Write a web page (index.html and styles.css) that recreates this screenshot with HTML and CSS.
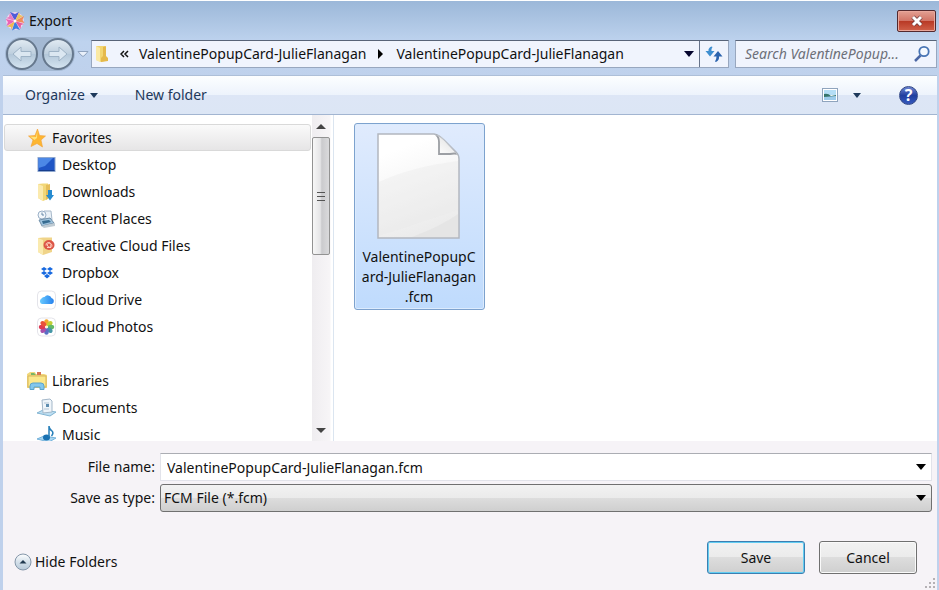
FILE: index.html
```html
<!DOCTYPE html>
<html lang="en">
<head>
    <meta charset="UTF-8">
    <meta name="viewport" content="width=device-width, initial-scale=1.0">
    <title>Export</title>
    <link rel="stylesheet" href="styles.css">
</head>
<body>
    <header class="titlebar">
        <svg class="app-icon" width="20" height="20" viewBox="0 0 20 20">
            <circle cx="10" cy="10" r="9" fill="#f0d4ee"/>
            <path d="M10 10L5 1L10 3L14 1Z" fill="#4f5cd8"/>
            <path d="M10 10L14 1.500L15 4L18 5Z" fill="#eac45c"/>
            <path d="M10 10L19 5L17.500 9L19.500 12Z" fill="#ef8d58"/>
            <path d="M10 10L19 13L16 14L15.500 18Z" fill="#e85f9c"/>
            <path d="M10 10L15 19L11 17.500L7 19.500Z" fill="#3f7fe0"/>
            <path d="M10 10L6.500 19L6 16L2 15.500Z" fill="#efb94f"/>
            <path d="M10 10L1.500 15L3 11L.5 8Z" fill="#ec62b4"/>
            <path d="M10 10L1 7L4 6L5 2Z" fill="#e77cc0"/>
            <circle cx="10" cy="10" r="1.500" fill="#fff"/>
        </svg>
        <h1>Export</h1>
        <button class="close" aria-label="Close">
            <svg width="14" height="12" viewBox="0 0 14 12">
                <path d="M3 2L11 10M11 2L3 10" stroke="#6d3b3c" stroke-width="4.500"/>
                <path d="M3 2L11 10M11 2L3 10" stroke="#fff" stroke-width="3"/>
            </svg>
        </button>
    </header>

    <div class="address-row">
        <div class="history">
            <button aria-label="Back">
                <svg width="22" height="22" viewBox="0 0 22 22"><path d="M2 11L10 4V8.500H20V13.500H10V18Z" fill="#dbe7f1" stroke="#9eb3c6"/></svg>
            </button>
            <button aria-label="Forward">
                <svg width="22" height="22" viewBox="0 0 22 22"><path d="M20 11L12 4V8.500H2V13.500H12V18Z" fill="#dbe7f1" stroke="#9eb3c6"/></svg>
            </button>
        </div>
        <button class="recent" aria-label="Recent pages">
            <svg width="12" height="8" viewBox="0 0 12 8"><path d="M1 1.500H11L8 5L6 6.500L4 5Z" fill="#e9f0fa" stroke="#8fa3bf"/></svg>
        </button>
        <nav class="address" aria-label="Address">
            <svg class="folder" width="16" height="20" viewBox="0 0 16 20">
                <path d="M2 2H11V17L7 18L2 16Z" fill="#f3d671"/>
                <path d="M2 2L6 4V18L2 16Z" fill="#fae9a4"/>
                <path d="M9 3L12 2V12L14 14V17L7 18V14L9 12Z" fill="#e5b94b"/>
            </svg>
            <button class="crumb-more" aria-label="More folders">
                <svg width="9" height="8" viewBox="0 0 9 8"><path d="M4 1L1 4L4 7M8 1L5 4L8 7" fill="none" stroke="#111" stroke-width="1.500"/></svg>
            </button>
            <a class="crumb" href="#">ValentinePopupCard-JulieFlanagan</a>
            <svg class="crumb-arrow" width="6" height="10" viewBox="0 0 6 10"><path d="M0 0L5 5L0 10Z" fill="#000"/></svg>
            <a class="crumb" href="#">ValentinePopupCard-JulieFlanagan</a>
            <button class="address-drop" aria-label="Previous locations">
                <svg width="10" height="6" viewBox="0 0 10 6"><path d="M0 0H10L5 6Z" fill="#05052e"/></svg>
            </button>
            <button class="refresh" aria-label="Refresh">
                <svg width="18" height="18" viewBox="0 0 18 18">
                    <path d="M6.500 1.500Q3 3 3.500 6H.5L5 11.500L9.500 6H6.500Q6 4 7.500 2Z" fill="#3f8fd0"/>
                    <path d="M11 17Q14.500 15 14 11.500H17.500L13 6L8.500 11.500H11.500Q11.500 14 10 16.500Z" fill="#2c64ae"/>
                </svg>
            </button>
        </nav>
        <div class="search">
            <input type="search" placeholder="Search ValentinePopup..." aria-label="Search folder">
            <svg width="18" height="18" viewBox="0 0 18 18">
                <path d="M7.500 10.500L2 16" stroke="#4b67a5" stroke-width="2.500"/>
                <circle cx="11" cy="6.500" r="4.700" fill="#f4f9ff" stroke="#4774b4" stroke-width="1.800"/>
            </svg>
        </div>
    </div>

    <div class="toolbar">
        <button class="organize">Organize
            <svg width="8" height="5" viewBox="0 0 8 5"><path d="M0 0H8L4 5Z" fill="#1e395b"/></svg>
        </button>
        <button class="new-folder">New folder</button>
        <button class="view" aria-label="Change view">
            <svg width="16" height="14" viewBox="0 0 16 14">
                <rect x=".5" y=".5" width="15" height="13" fill="#fff" stroke="#8fa4bd"/>
                <rect x="2" y="2" width="12" height="5" fill="#b4def6"/>
                <path d="M2 6Q6 5 9 8L14 7V10H2Z" fill="#35756b"/>
                <path d="M2 9L14 8V12H2Z" fill="#9ccbeb"/>
            </svg>
        </button>
        <button class="view-drop" aria-label="More views">
            <svg width="8" height="5" viewBox="0 0 8 5"><path d="M0 0H8L4 5Z" fill="#1e395b"/></svg>
        </button>
        <button class="help" aria-label="Help">?</button>
    </div>

    <main class="browser">
        <nav class="tree" aria-label="Folders">
            <ul>
                <li class="group selected">
                    <svg width="20" height="20" viewBox="0 0 20 20">
                        <path d="M10.500 1L12.500 7.500L18.500 8L14 12L15.500 19L10 15.500L4 18.500L6 12L1.500 8L8 7.500Z" fill="#fdb632" stroke="#f3a032" stroke-width=".6"/>
                        <path d="M10.500 2L9 9L3 8.500L7.500 12L10 10Z" fill="#ffe27d"/>
                    </svg>
                    <a href="#">Favorites</a>
                </li>
                <li>
                    <svg width="20" height="20" viewBox="0 0 20 20">
                        <rect x="0.500" y="2" width="18" height="15" fill="#8fa8cf"/>
                        <rect x="1.500" y="3" width="16" height="13" fill="#1f55c5"/>
                        <path d="M1.500 3H16L8 11L1.500 13Z" fill="#4c88e6"/>
                        <path d="M1.500 15H17.500V16H1.500Z" fill="#173d8c"/>
                    </svg>
                    <a href="#">Desktop</a>
                </li>
                <li>
                    <svg width="20" height="20" viewBox="0 0 20 20">
                        <path d="M1 2L6 1.500H11V17L6 19L1 16Z" fill="#f2d778"/>
                        <path d="M1 2L6 4V19L1 16Z" fill="#fbeaae"/>
                        <path d="M9 3L13 2V15L9 18Z" fill="#e5bd59"/>
                        <path d="M11 8H15V13H17L13 18.500L9 13H11Z" fill="#268bd0"/>
                    </svg>
                    <a href="#">Downloads</a>
                </li>
                <li>
                    <svg width="20" height="20" viewBox="0 0 20 20">
                        <path d="M7 2H14L15 11H8Z" fill="#eaf1f7" stroke="#a8b9ca"/>
                        <circle cx="5" cy="6" r="4" fill="#f2f7fb" stroke="#9bb0c7"/>
                        <path d="M5 3.500V6H7" fill="none" stroke="#6688a8"/>
                        <path d="M2 11L13 9L17 14L5 17Z" fill="#a1c5df" stroke="#708fa9"/>
                        <path d="M5 12L12 11L14 13L6 15Z" fill="#386d91"/>
                        <path d="M4 17L18 14V17L7 19Z" fill="#bfcbd3"/>
                    </svg>
                    <a href="#">Recent Places</a>
                </li>
                <li>
                    <svg width="20" height="20" viewBox="0 0 20 20">
                        <path d="M1 2L6 1.500H15V16L6 19L1 16Z" fill="#f0d489"/>
                        <path d="M1 2L6 4V19L1 16Z" fill="#faeaaf"/>
                        <ellipse cx="12" cy="9" rx="5.500" ry="5" fill="#dc5547"/>
                        <path d="M9 9.500A2.500 2.500 0 1 1 12 11.500L10 9A2.500 2.500 0 1 1 14 11.500H10" fill="none" stroke="#ffd0c0"/>
                    </svg>
                    <a href="#">Creative Cloud Files</a>
                </li>
                <li>
                    <svg width="20" height="20" viewBox="0 0 20 20">
                        <path d="M7 4L10 6L7 8L4 6ZM13 4L16 6L13 8L10 6ZM7 8L10 10L7 12L4 10ZM13 8L16 10L13 12L10 10ZM7 13L10 11L13 13L10 15.500Z" fill="#1769e0"/>
                    </svg>
                    <a href="#">Dropbox</a>
                </li>
                <li>
                    <svg width="20" height="20" viewBox="0 0 20 20">
                        <defs><linearGradient id="cloud"><stop stop-color="#69caff"/><stop offset="1" stop-color="#2681ed"/></linearGradient></defs>
                        <rect x=".5" y="1" width="18" height="18" rx="4" fill="#fff" stroke="#e4e4ea"/>
                        <path d="M5 14A3 3 0 0 1 4.500 8.500A3 3 0 0 1 7.500 7A4 4 0 0 1 14.500 8A3.200 3.200 0 0 1 15 14Z" fill="url(#cloud)"/>
                    </svg>
                    <a href="#">iCloud Drive</a>
                </li>
                <li>
                    <svg width="20" height="20" viewBox="0 0 20 20">
                        <rect x=".5" y="1" width="18" height="18" rx="4" fill="#fff" stroke="#e4e4ea"/>
                        <g transform="translate(9.500 10)">
                            <ellipse cy="-4.500" rx="2.300" ry="3.200" fill="#f5a52d"/>
                            <ellipse cy="-4.500" rx="2.300" ry="3.200" fill="#c2cf35" transform="rotate(45)"/>
                            <ellipse cy="-4.500" rx="2.300" ry="3.200" fill="#63b965" transform="rotate(90)"/>
                            <ellipse cy="-4.500" rx="2.300" ry="3.200" fill="#4596a6" transform="rotate(135)"/>
                            <ellipse cy="-4.500" rx="2.300" ry="3.200" fill="#596fc4" transform="rotate(180)"/>
                            <ellipse cy="-4.500" rx="2.300" ry="3.200" fill="#a850ac" transform="rotate(225)"/>
                            <ellipse cy="-4.500" rx="2.300" ry="3.200" fill="#de3954" transform="rotate(270)"/>
                            <ellipse cy="-4.500" rx="2.300" ry="3.200" fill="#ea513b" transform="rotate(315)"/>
                            <circle r="1.300" fill="#fff3d0"/>
                        </g>
                    </svg>
                    <a href="#">iCloud Photos</a>
                </li>
            </ul>
            <ul>
                <li class="group">
                    <svg width="20" height="20" viewBox="0 0 20 20">
                        <path d="M0 3L3 1H8L9 3H17L20 4V17H0Z" fill="#f0d77b"/>
                        <path d="M4 2H7L9 4H4Z" fill="#77b566"/><path d="M10 1H14V4H10Z" fill="#d87555"/>
                        <path d="M1 5H19V16H1Z" fill="#fbe88c" stroke="#d9b55d"/>
                        <path d="M3 18.500V15Q3 12 6 12H14Q17 12 17 15V18.500H13V16H7V18.500Z" fill="#82c7ed" stroke="#5ba4cc"/>
                    </svg>
                    <a href="#">Libraries</a>
                </li>
                <li>
                    <svg width="20" height="20" viewBox="0 0 20 20">
                        <path d="M0 15L6 12L19 14L13 18Z" fill="#bddff2" stroke="#82b4d2"/>
                        <path d="M5 2L13 1L15 3V14L6 15Z" fill="#eff5fa" stroke="#a3b7c9"/>
                        <path d="M7 5H12M7 11H12" stroke="#b4c6d5"/><path d="M9 6H12V9H9Z" fill="#5e8daf"/>
                    </svg>
                    <a href="#">Documents</a>
                </li>
                <li>
                    <svg width="20" height="20" viewBox="0 0 20 20">
                        <path d="M0 14L7 11L19 13L12 17Z" fill="#a9d6f1" stroke="#75b2da"/>
                        <ellipse cx="9.500" cy="12.500" rx="3.500" ry="3" fill="#1971b1"/>
                        <path d="M12 12V1Q12 4 15 6Q17 8 14.500 11" fill="none" stroke="#277fb9" stroke-width="1.500"/>
                    </svg>
                    <a href="#">Music</a>
                </li>
            </ul>
        </nav>
        <div class="scrollbar">
            <svg width="10" height="6" viewBox="0 0 10 6"><path d="M0 6L5 1L10 6Z" fill="#444"/></svg>
            <div class="thumb"><span></span><span></span><span></span></div>
            <svg class="down" width="10" height="6" viewBox="0 0 10 6"><path d="M0 0H10L5 5Z" fill="#444"/></svg>
        </div>
        <section class="files" aria-label="Files">
            <button class="file">
                <svg width="84" height="108" viewBox="0 0 84 108">
                    <defs>
                        <linearGradient id="paper" x2=".3" y2="1"><stop offset=".2" stop-color="#fff"/><stop offset="1" stop-color="#ececec"/></linearGradient>
                        <linearGradient id="fold" x1="0" y1="1" x2=".6" y2=".3"><stop stop-color="#fff"/><stop offset="1" stop-color="#e8e8e8"/></linearGradient>
                    </defs>
                    <path d="M1 2H57Q62 3 67 8L79 20Q82 23 82 27V106H1Z" fill="url(#paper)" stroke="#b2b7bf" stroke-width="1.500"/>
                    <path d="M2 50Q34 35 81 29V78L2 104Z" fill="#e9e9e9" opacity=".35"/>
                    <path d="M35 105Q64 94 81 82V105Z" fill="#ddd" opacity=".4"/>
                    <path d="M59 3Q62 5 62 10V22H73Q78 21 80 22L67 8Q62 3 59 3Z" fill="url(#fold)"/>
                    <path d="M59 3Q62 5 62 10V22H73Q78 21 80 22" fill="none" stroke="#9c9fa4" stroke-width="1.800"/>
                    <path d="M59 3Q63 4 67 8L80 22" fill="none" stroke="#bcc0c6"/>
                </svg>
                <span>ValentinePopupC<br>ard-JulieFlanagan<br>.fcm</span>
            </button>
        </section>
    </main>

    <form class="footer">
        <div class="fields">
            <label for="fileName">File name:</label>
            <div class="combo">
                <input type="text" id="fileName" value="ValentinePopupCard-JulieFlanagan.fcm">
                <svg width="10" height="6" viewBox="0 0 10 6"><path d="M0 0H10L5 6Z"/></svg>
            </div>
            <label for="fileType">Save as type:</label>
            <div class="combo">
                <select id="fileType">
                    <option>FCM File (*.fcm)</option>
                </select>
                <svg width="10" height="6" viewBox="0 0 10 6"><path d="M0 0H10L5 6Z"/></svg>
            </div>
        </div>
        <div class="actions">
            <button type="button" class="hide-folders">
                <svg width="18" height="18" viewBox="0 0 18 18">
                    <defs><linearGradient id="knob" x2="0" y2="1"><stop stop-color="#fff"/><stop offset=".5" stop-color="#d4e0ea"/><stop offset="1" stop-color="#b7c9d9"/></linearGradient></defs>
                    <circle cx="9" cy="9" r="8" fill="url(#knob)" stroke="#8496a9"/>
                    <path d="M5.500 10.500L9 7L12.500 10.500Z" fill="#20384f"/>
                </svg>
                Hide Folders
            </button>
            <button type="button" class="btn default">Save</button>
            <button type="button" class="btn">Cancel</button>
        </div>
        <svg class="grip" width="11" height="11" viewBox="0 0 11 11">
            <path d="M8 0H10V2H8ZM4 4H6V6H4ZM8 4H10V6H8ZM0 8H2V10H0ZM4 8H6V10H4ZM8 8H10V10H8Z" fill="#b5b1b5"/>
        </svg>
    </form>
</body>
</html>
```
FILE: styles.css
```css
* {
    box-sizing: border-box;
}
body {
    font-family: "Noto Sans", "Open Sans", sans-serif;
    font-size: 14px;
    line-height: 20px;
    color: #111;
    display: flex;
    flex-direction: column;
    height: 100vh;
    margin: 0;
    padding: 0 2px 0 3px;
    overflow: hidden;
    background: linear-gradient(#9bb7d8, #bed3ee 42px, #bfd1ec 80px);
    border-top: 1px solid #fff;
}
button, input, select {
    font: inherit;
    color: inherit;
}
button {
    display: flex;
    align-items: center;
    justify-content: center;
    padding: 0;
    border: none;
    background: none;
}
a {
    color: inherit;
    text-decoration: none;
}
svg {
    display: block;
    flex: none;
}

/* title bar */
.titlebar {
    display: flex;
    align-items: center;
    gap: 4px;
    height: 38px;
    padding: 2px 1px 0 2px;
}
h1 {
    margin: 0;
    font-size: 14px;
    font-weight: normal;
}
.close {
    width: 39px;
    height: 22px;
    margin-left: auto;
    border: 1px solid #53292e;
    border-radius: 2px;
    box-shadow: inset 0 0 0 1px #e9a79b;
    background: linear-gradient(#e3a093, #d27567 48%, #b93a26 52%, #d0614a);
}

/* address row */
.address-row {
    display: flex;
    align-items: center;
    height: 36px;
    padding-bottom: 6px;
}
.history {
    display: flex;
    gap: 4px;
    padding: 1px;
    margin-left: 2px;
    border-radius: 18px;
    background: #a4b9d3;
}
.history button {
    width: 32px;
    height: 32px;
    border: 2px solid #66788d;
    border-radius: 50%;
    background: linear-gradient(#e0eaf2, #bdcedd 50%, #b3c7d9 51%, #d4e4f0);
}
.recent {
    width: 16px;
    height: 24px;
}
.address, .search {
    display: flex;
    align-items: center;
    height: 28px;
    border: 1px solid #98a7bf;
    border-top-color: #586478;
    background: #f0f4fd;
}
.address {
    flex: 1;
    min-width: 0;
    margin-right: 6px;
}
.folder {
    margin: 0 10px 0 2px;
}
.crumb-more {
    margin-right: 10px;
}
.crumb {
    white-space: nowrap;
}
.crumb-arrow {
    margin: 0 12px;
}
.address-drop {
    width: 20px;
    height: 26px;
    margin-left: auto;
}
.refresh {
    width: 29px;
    height: 26px;
    border-left: 1px solid #66738a;
}
.search {
    width: 202px;
    padding: 0 5px 0 9px;
}
.search input {
    flex: 1;
    min-width: 0;
    padding: 0;
    border: none;
    outline: none;
    background: none;
    font-style: italic;
}
.search input::placeholder {
    color: #6d7079;
    opacity: 1;
}

/* command bar */
.toolbar {
    display: flex;
    align-items: center;
    height: 40px;
    padding: 0 19px 0 22px;
    border-top: 1px solid #adbfd8;
    border-bottom: 1px solid #a2b5d1;
    background: linear-gradient(#fcfeff, #edf3fc 50%, #dde6f6 51%, #dce6f5);
    color: #1e395b;
}
.organize {
    gap: 5px;
}
.new-folder {
    margin-left: 37px;
}
.view {
    margin-left: auto;
}
.view-drop {
    margin: 0 38px 0 15px;
}
.help {
    width: 19px;
    height: 19px;
    border: 1px solid #324886;
    border-radius: 50%;
    background: linear-gradient(#6e86d2, #203f9f 50%, #3559be);
    color: #fff;
    font-size: 16px;
    font-weight: bold;
}

/* folder tree and files */
.browser {
    display: flex;
    flex: 1;
    min-height: 0;
    background: #fff;
}
.tree {
    width: 309px;
    padding: 9px 1px 0;
    overflow: hidden;
}
.tree ul {
    margin: 0 0 27px;
    padding: 0;
    list-style: none;
}
.tree li {
    display: flex;
    align-items: center;
    gap: 5px;
    height: 27px;
    padding-left: 33px;
}
.tree .group {
    padding-left: 23px;
}
.tree .selected {
    padding-left: 22px;
    border: 1px solid #d9d9d9;
    border-radius: 3px;
    background: linear-gradient(#fafafa, #e6e5e6);
}
.scrollbar {
    display: flex;
    flex-direction: column;
    align-items: center;
    width: 22px;
    padding: 8px 3px 7px 0;
    border-right: 1px solid #dbe5f0;
    background: linear-gradient(90deg, #efedf0, #f7f5f7 18px, #fff 19px);
}
.thumb {
    display: flex;
    flex-direction: column;
    align-items: center;
    justify-content: center;
    gap: 3px;
    width: 18px;
    height: 118px;
    margin-top: 8px;
    border: 1px solid #929292;
    border-radius: 2px;
    background: linear-gradient(90deg, #f7f7f7, #e5e5e7 45%, #cacacd 55%, #dadadc);
}
.thumb span {
    width: 8px;
    height: 1px;
    background: #555;
}
.down {
    margin-top: auto;
}
.files {
    flex: 1;
    padding: 8px 20px;
}
.file {
    flex-direction: column;
    gap: 7px;
    width: 131px;
    height: 187px;
    padding: 6px 1px 0 0;
    border: 1px solid #7da2ce;
    border-radius: 3px;
    box-shadow: inset 0 0 0 1px #dcebfd;
    background: linear-gradient(#e0ebfd, #bfdbfd);
}

/* bottom panel */
.footer {
    position: relative;
    height: 149px;
    padding: 12px 5px 0 11px;
    background: #f6f3f7;
}
.fields {
    display: grid;
    grid-template-columns: 141px 1fr;
    gap: 3px 5px;
    align-items: center;
}
.fields label {
    text-align: right;
}
.combo {
    position: relative;
}
.combo input, .combo select {
    display: block;
    width: 100%;
    height: 28px;
    border: 1px solid #e2e3ea;
}
.combo input {
    padding: 0 24px 0 6px;
    border-top-color: #abadb3;
    background: #fff;
}
.combo select {
    appearance: none;
    padding: 0 24px 0 3px;
    border-color: #707070;
    border-radius: 3px;
    background: linear-gradient(#f2f2f2, #ebebeb 49%, #dddddd 50%, #cfcfcf);
}
/* arrow sits over the field */
.combo svg {
    position: absolute;
    top: 11px;
    right: 6px;
    pointer-events: none;
}
.actions {
    display: flex;
    align-items: center;
    gap: 14px;
    padding: 29px 15px 0 0;
}
.hide-folders {
    gap: 3px;
    margin: 8px auto 0 0;
}
.btn {
    width: 98px;
    height: 33px;
    border: 1px solid #707070;
    border-radius: 3px;
    box-shadow: inset 0 0 0 1px #fafafa;
    background: linear-gradient(#f2f2f2, #ebebeb 49%, #dddddd 50%, #cfcfcf);
}
.default {
    border-color: #3c7fb1;
    box-shadow: inset 0 0 0 1px #62cdf2;
}
.grip {
    position: absolute;
    right: 1px;
    bottom: 1px;
}
```
